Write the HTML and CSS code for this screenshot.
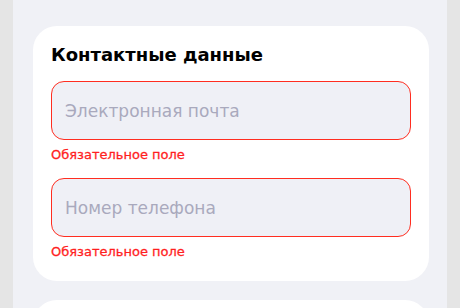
FILE: index.html
```html
<!DOCTYPE html>
<html lang="ru">
<head>
<meta charset="utf-8">
<link rel="stylesheet" href="styles.css">
</head>
<body>
<div class="page">
  <main class="content">
    <section class="card">
      <h2 class="title">Контактные данные</h2>
      <div class="field">
        <div class="input">Электронная почта</div>
        <div class="error">Обязательное поле</div>
      </div>
      <div class="field">
        <div class="input">Номер телефона</div>
        <div class="error">Обязательное поле</div>
      </div>
    </section>
    <section class="card next"></section>
  </main>
</div>
</body>
</html>
```
FILE: styles.css
```css
html, body {
  margin: 0;
  padding: 0;
  height: 100%;
  overflow: hidden;
}
body {
  background: #e5e5e5;
  font-family: "DejaVu Sans", "Noto Sans", sans-serif;
}
.page {
  height: 100%;
  display: flex;
  justify-content: flex-start;
  padding-left: 13px;
}
.content {
  width: 434px;
  background: #f0f1f6;
  padding: 26px 18px 0 20px;
  box-sizing: border-box;
  display: flex;
  flex-direction: column;
  gap: 19px;
}
.card {
  background: #ffffff;
  border-radius: 24px;
  padding: 17px 18px 21px 18px;
  display: flex;
  flex-direction: column;
}
.card.next {
  height: 60px;
  padding: 0;
  flex-shrink: 0;
}
.title {
  margin: 0 0 14px 0;
  font-size: 18px;
  line-height: 24px;
  font-weight: 700;
  color: #000;
}
.field + .field {
  margin-top: 15px;
}
.input {
  height: 59px;
  box-sizing: border-box;
  border: 1px solid #ff2d20;
  border-radius: 13px;
  background: #eff0f6;
  display: flex;
  align-items: center;
  padding: 0 13px;
  font-size: 17px;
  color: #a9a9bd;
}
.error {
  margin-top: 7px;
  font-size: 13px;
  line-height: 16px;
  font-weight: 500;
  color: #ff1f1f;
  -webkit-text-stroke: 0.3px #ff1f1f;
}
```
